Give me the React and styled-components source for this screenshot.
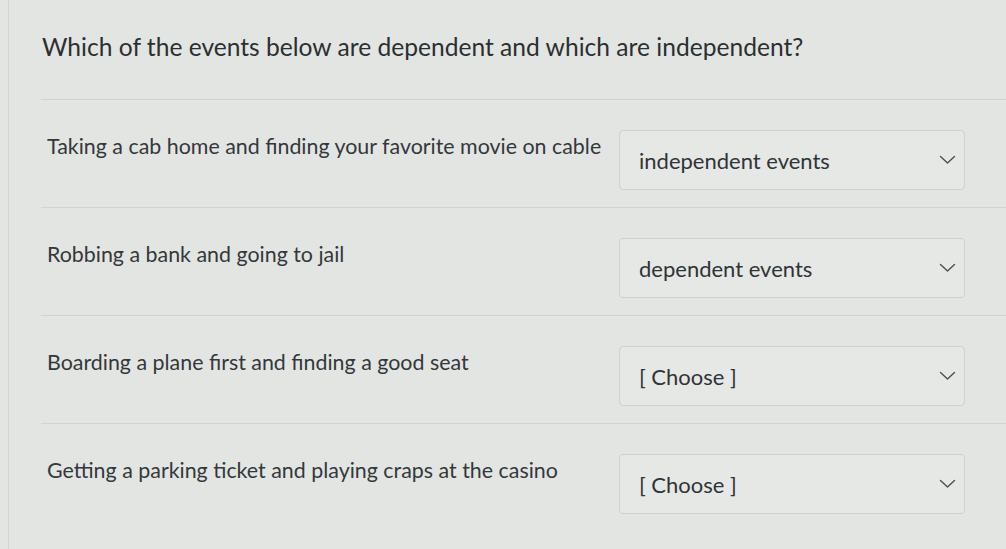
import styled, { createGlobalStyle } from 'styled-components';

const GlobalStyle = createGlobalStyle`
  body {
    margin: 0;
    background: #e3e5e3;
    font-family: 'Lato', 'Liberation Sans', sans-serif;
    color: #2f3336;
  }
`;

const rows = [
  { label: 'Taking a cab home and finding your favorite movie on cable', value: 'independent events' },
  { label: 'Robbing a bank and going to jail', value: 'dependent events' },
  { label: 'Boarding a plane first and finding a good seat', value: '[ Choose ]' },
  { label: 'Getting a parking ticket and playing craps at the casino', value: '[ Choose ]' },
];

function Chevron() {
  return (
    <svg width="17" height="10" viewBox="0 0 17 10" fill="none">
      <path d="M1.5 1.5 L8.5 8 L15.5 1.5" stroke="#4a4f52" strokeWidth="1.4" strokeLinecap="round" strokeLinejoin="round" />
    </svg>
  );
}

export default function App() {
  return (
    <>
      <GlobalStyle />
      <Panel>
        <Header>
          <Title>Which of the events below are dependent and which are independent?</Title>
        </Header>
        {rows.map((r) => (
          <Row key={r.label}>
            <Label>{r.label}</Label>
            <Select>
              <SelectText>{r.value}</SelectText>
              <Chevron />
            </Select>
          </Row>
        ))}
      </Panel>
    </>
  );
}

const Panel = styled.div`
  margin-left: 8px;
  min-height: 549px;
  border-left: 1px solid #d2d4d2;
  padding-left: 32px;
  box-sizing: border-box;
`;

const Header = styled.div`
  height: 100px;
  box-sizing: border-box;
  padding-top: 31px;
  border-bottom: 1px solid #d3d5d3;
`;

const Title = styled.h1`
  margin: 0 0 0 1px;
  font-size: 24.6px;
  font-weight: 400;
  line-height: 32px;
  color: #2b2f31;
`;

const Row = styled.div`
  display: flex;
  justify-content: space-between;
  align-items: flex-start;
  height: 108px;
  box-sizing: border-box;
  padding: 30px 41px 0 6px;
  border-bottom: 1px solid #d3d5d3;

  &:last-child {
    border-bottom: 0;
  }
`;

const Label = styled.div`
  font-size: 21.4px;
  line-height: 26px;
  padding-top: 3px;
  color: #33383b;
`;

const Select = styled.div`
  width: 346px;
  height: 60px;
  box-sizing: border-box;
  display: flex;
  align-items: center;
  justify-content: space-between;
  padding: 0 8px 0 19px;
  background: #e6e8e6;
  border: 1px solid #cfd1cf;
  border-radius: 4px;
`;

const SelectText = styled.span`
  font-size: 22px;
  color: #2f3437;
`;
